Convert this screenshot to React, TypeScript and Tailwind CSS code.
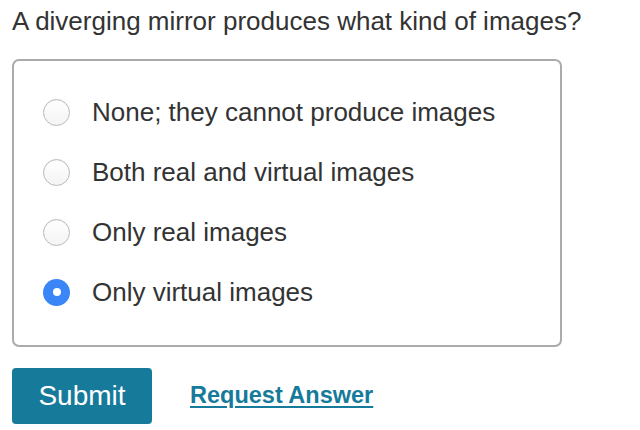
import React from 'react';

const options = [
  'None; they cannot produce images',
  'Both real and virtual images',
  'Only real images',
  'Only virtual images',
];

const Radio: React.FC<{ checked: boolean }> = ({ checked }) =>
  checked ? (
    <span className="flex h-[27px] w-[27px] shrink-0 items-center justify-center rounded-full bg-[#3b86f7]">
      <span className="h-[8px] w-[8px] rounded-full bg-white" />
    </span>
  ) : (
    <span className="h-[27px] w-[27px] shrink-0 rounded-full border border-[#b9b9b9] bg-gradient-to-b from-white to-[#f4f4f4] shadow-[inset_0_1px_1px_rgba(0,0,0,0.05)]" />
  );

export default function App() {
  const selected = 3;
  return (
    <div className="h-[430px] w-[640px] bg-white px-[12px] pt-[6px] text-[#333] font-['Liberation_Sans',Arial,sans-serif]">
      <h1 className="text-[26px] leading-[30px] whitespace-nowrap">A diverging mirror produces what kind of images?</h1>

      <div className="mt-[23px] w-[550px] rounded-[7px] border-2 border-[#ababab] pt-[21px] pb-[23px] pl-[29px]">
        {options.map((opt, i) => (
          <label key={opt} className="flex h-[60px] items-center gap-[22px]">
            <Radio checked={i === selected} />
            <span className="text-[26px] whitespace-nowrap">{opt}</span>
          </label>
        ))}
      </div>

      <div className="mt-[21px] flex items-center gap-[38px]">
        <button className="h-[56px] w-[140px] rounded-[4px] bg-[#167a9a] text-[28px] text-white">Submit</button>
        <a className="text-[23.5px] font-bold text-[#167a9a] underline underline-offset-[3px]" href="#">
          Request Answer
        </a>
      </div>
    </div>
  );
}
